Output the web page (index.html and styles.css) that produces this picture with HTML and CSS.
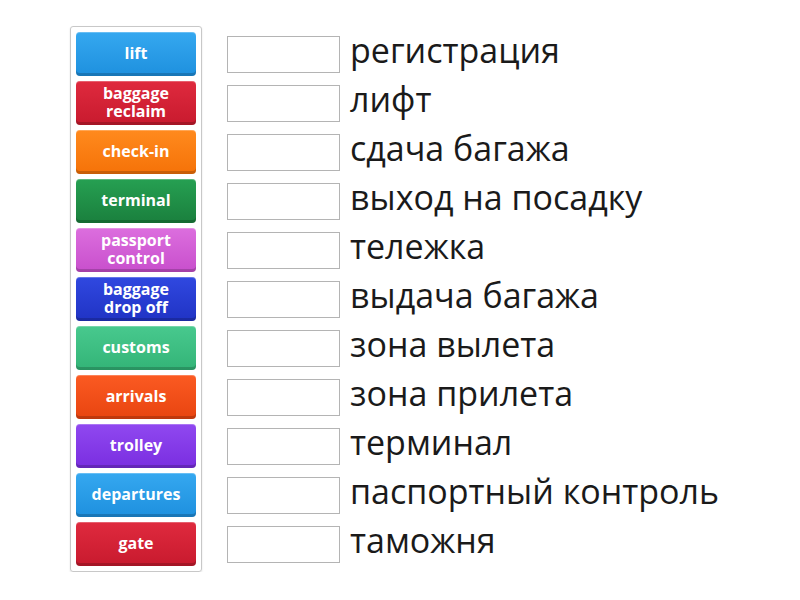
FILE: index.html
```html
<!DOCTYPE html>
<html lang="ru">
<head>
    <meta charset="UTF-8">
    <title>Airport vocabulary</title>
    <link rel="stylesheet" href="styles.css">
</head>
<body>
    <main class="game">
        <div class="tiles">
            <div class="tile blue">lift</div>
            <div class="tile red">baggage reclaim</div>
            <div class="tile orange">check-in</div>
            <div class="tile green">terminal</div>
            <div class="tile pink">passport control</div>
            <div class="tile navy">baggage drop off</div>
            <div class="tile mint">customs</div>
            <div class="tile flame">arrivals</div>
            <div class="tile purple">trolley</div>
            <div class="tile blue">departures</div>
            <div class="tile red">gate</div>
        </div>
        <div class="answers">
            <div class="row"><span class="slot"></span><span class="word">регистрация</span></div>
            <div class="row"><span class="slot"></span><span class="word">лифт</span></div>
            <div class="row"><span class="slot"></span><span class="word">сдача багажа</span></div>
            <div class="row"><span class="slot"></span><span class="word">выход на посадку</span></div>
            <div class="row"><span class="slot"></span><span class="word">тележка</span></div>
            <div class="row"><span class="slot"></span><span class="word">выдача багажа</span></div>
            <div class="row"><span class="slot"></span><span class="word">зона вылета</span></div>
            <div class="row"><span class="slot"></span><span class="word">зона прилета</span></div>
            <div class="row"><span class="slot"></span><span class="word">терминал</span></div>
            <div class="row"><span class="slot"></span><span class="word">паспортный контроль</span></div>
            <div class="row"><span class="slot"></span><span class="word">таможня</span></div>
        </div>
    </main>
</body>
</html>
```

FILE: styles.css
```css
body {
    margin: 0;
    background: #ffffff;
    font-family: 'Open Sans', sans-serif;
}
.game {
    display: flex;
    align-items: flex-start;
    padding: 26px 0 0 70px;
}
.tiles {
    display: flex;
    flex-direction: column;
    gap: 5px;
    padding: 5px;
    border: 1px solid #c8c8c8;
    border-radius: 3px;
    box-shadow: 0 1px 2px rgba(0,0,0,0.12);
}
.tile {
    width: 120px;
    height: 44px;
    box-sizing: border-box;
    display: flex;
    align-items: center;
    justify-content: center;
    text-align: center;
    padding: 0 10px 2px;
    border-radius: 4px;
    color: #fff;
    font-weight: 700;
    font-size: 16px;
    line-height: 18px;
    box-shadow: inset 0 1px 0 rgba(255,255,255,0.25), inset 0 -3px 0 rgba(0,0,0,0.18);
}
.blue   { background: linear-gradient(#35a8f0, #1e90de); }
.red    { background: linear-gradient(#df2a3e, #c81a2e); }
.orange { background: linear-gradient(#ff8a1e, #f57208); }
.green  { background: linear-gradient(#26a052, #1a7f3d); }
.pink   { background: linear-gradient(#dc6ede, #c84fcc); }
.navy   { background: linear-gradient(#3048e0, #2033c4); }
.mint   { background: linear-gradient(#48c98e, #33b477); }
.flame  { background: linear-gradient(#fb5a22, #e84410); }
.purple { background: linear-gradient(#9048f0, #7a2ee0); }
.answers {
    display: flex;
    flex-direction: column;
    gap: 5px;
    margin-left: 25px;
    padding-top: 6px;
}
.row {
    height: 44px;
    display: flex;
    align-items: center;
}
.slot {
    width: 113px;
    height: 37px;
    box-sizing: border-box;
    border: 1px solid #b4b4b4;
    background: #fff;
}
.word {
    margin: 0 0 8px 10px;
    font-size: 34px;
    line-height: 44px;
    color: #1a1a1a;
    white-space: nowrap;
}
```
